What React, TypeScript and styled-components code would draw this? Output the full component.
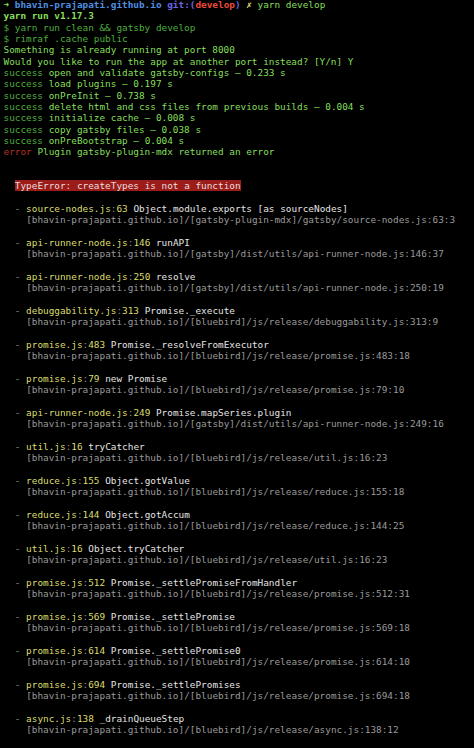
import styled, { createGlobalStyle } from 'styled-components';

const GlobalStyle = createGlobalStyle`
  html, body {
    margin: 0;
    padding: 0;
    background: #000;
  }
`;

const colors = {
  green: '#86df5c',
  dimGreen: '#4fae3e',
  red: '#b8321f',
  yellow: '#dcdc6e',
  grey: '#8c8c8c',
  path: '#9a9a9a',
  white: '#e4e4e4',
  blue: '#4f8fe0',
  purple: '#6a66e6',
  prompt: '#f04a3c',
};

const LH = 11.33;

const Terminal = styled.div`
  height: 748px;
  overflow: hidden;
  background: #000;
  padding: 0 0 0 3.5px;
  font-family: 'DejaVu Sans Mono', 'Liberation Mono', monospace;
  font-size: 9.4px;
  line-height: ${LH}px;
  white-space: pre;
  color: ${colors.green};
`;

const Scroll = styled.div`
  margin-top: -1px;
`;

const Line = styled.div<{ $indent?: number; $color?: string; $bold?: boolean }>`
  height: ${LH}px;
  padding-left: ${(p) => (p.$indent || 0) * 5.66}px;
  color: ${(p) => p.$color || colors.green};
  font-weight: ${(p) => (p.$bold ? 700 : 400)};
`;

const Blank = styled.div`
  height: ${LH}px;
`;

const C = styled.span<{ $color: string; $bold?: boolean }>`
  color: ${(p) => p.$color};
  font-weight: ${(p) => (p.$bold ? 700 : 400)};
`;

const ErrorBadge = styled.span`
  background: #9c1c1a;
  color: #e8dede;
`;

type Frame = { file: string; line: number; fn: string; path: string };

const frames: Frame[] = [
  { file: 'source-nodes.js', line: 63, fn: 'Object.module.exports [as sourceNodes]', path: '[bhavin-prajapati.github.io]/[gatsby-plugin-mdx]/gatsby/source-nodes.js:63:3' },
  { file: 'api-runner-node.js', line: 146, fn: 'runAPI', path: '[bhavin-prajapati.github.io]/[gatsby]/dist/utils/api-runner-node.js:146:37' },
  { file: 'api-runner-node.js', line: 250, fn: 'resolve', path: '[bhavin-prajapati.github.io]/[gatsby]/dist/utils/api-runner-node.js:250:19' },
  { file: 'debuggability.js', line: 313, fn: 'Promise._execute', path: '[bhavin-prajapati.github.io]/[bluebird]/js/release/debuggability.js:313:9' },
  { file: 'promise.js', line: 483, fn: 'Promise._resolveFromExecutor', path: '[bhavin-prajapati.github.io]/[bluebird]/js/release/promise.js:483:18' },
  { file: 'promise.js', line: 79, fn: 'new Promise', path: '[bhavin-prajapati.github.io]/[bluebird]/js/release/promise.js:79:10' },
  { file: 'api-runner-node.js', line: 249, fn: 'Promise.mapSeries.plugin', path: '[bhavin-prajapati.github.io]/[gatsby]/dist/utils/api-runner-node.js:249:16' },
  { file: 'util.js', line: 16, fn: 'tryCatcher', path: '[bhavin-prajapati.github.io]/[bluebird]/js/release/util.js:16:23' },
  { file: 'reduce.js', line: 155, fn: 'Object.gotValue', path: '[bhavin-prajapati.github.io]/[bluebird]/js/release/reduce.js:155:18' },
  { file: 'reduce.js', line: 144, fn: 'Object.gotAccum', path: '[bhavin-prajapati.github.io]/[bluebird]/js/release/reduce.js:144:25' },
  { file: 'util.js', line: 16, fn: 'Object.tryCatcher', path: '[bhavin-prajapati.github.io]/[bluebird]/js/release/util.js:16:23' },
  { file: 'promise.js', line: 512, fn: 'Promise._settlePromiseFromHandler', path: '[bhavin-prajapati.github.io]/[bluebird]/js/release/promise.js:512:31' },
  { file: 'promise.js', line: 569, fn: 'Promise._settlePromise', path: '[bhavin-prajapati.github.io]/[bluebird]/js/release/promise.js:569:18' },
  { file: 'promise.js', line: 614, fn: 'Promise._settlePromise0', path: '[bhavin-prajapati.github.io]/[bluebird]/js/release/promise.js:614:10' },
  { file: 'promise.js', line: 694, fn: 'Promise._settlePromises', path: '[bhavin-prajapati.github.io]/[bluebird]/js/release/promise.js:694:18' },
  { file: 'async.js', line: 138, fn: '_drainQueueStep', path: '[bhavin-prajapati.github.io]/[bluebird]/js/release/async.js:138:12' },
];

const steps: [string, string][] = [
  ['open and validate gatsby-configs', '0.233 s'],
  ['load plugins', '0.197 s'],
  ['onPreInit', '0.738 s'],
  ['delete html and css files from previous builds', '0.004 s'],
  ['initialize cache', '0.008 s'],
  ['copy gatsby files', '0.038 s'],
  ['onPreBootstrap', '0.004 s'],
];

const App = () => (
  <>
    <GlobalStyle />
    <Terminal>
      <Scroll>
        <Line>
          <C $color={colors.green} $bold>➜ </C>
          <C $color={colors.blue} $bold>bhavin-prajapati.github.io </C>
          <C $color={colors.purple} $bold>git:(</C>
          <C $color={colors.prompt} $bold>develop</C>
          <C $color={colors.purple} $bold>)</C>
          <C $color={colors.yellow} $bold> ✗ </C>
          <C $color={colors.green}>yarn develop</C>
        </Line>
        <Line $bold>yarn run v1.17.3</Line>
        <Line $color={colors.dimGreen}>$ yarn run clean &amp;&amp; gatsby develop</Line>
        <Line $color={colors.dimGreen}>$ rimraf .cache public</Line>
        <Line>Something is already running at port 8000</Line>
        <Line>Would you like to run the app at another port instead? [Y/n] Y</Line>
        {steps.map(([label, time]) => (
          <Line key={label}>
            <C $color={colors.dimGreen}>success </C>
            {label} — {time}
          </Line>
        ))}
        <Line>
          <C $color={colors.red}>error </C>
          Plugin gatsby-plugin-mdx returned an error
        </Line>
        <Blank />
        <Blank />
        <Line $indent={2}>
          <ErrorBadge>TypeError: createTypes is not a function</ErrorBadge>
        </Line>
        <Blank />
        {frames.map((f, i) => (
          <div key={i}>
            <Line $indent={2}>
              <C $color={colors.grey}>- </C>
              <C $color={colors.yellow}>{f.file}</C>
              <C $color={colors.grey}>:</C>
              <C $color={colors.yellow}>{f.line}</C>
              <C $color={colors.white}> {f.fn}</C>
            </Line>
            <Line $indent={4} $color={colors.path}>{f.path}</Line>
            <Blank />
          </div>
        ))}
      </Scroll>
    </Terminal>
  </>
);

export default App;
